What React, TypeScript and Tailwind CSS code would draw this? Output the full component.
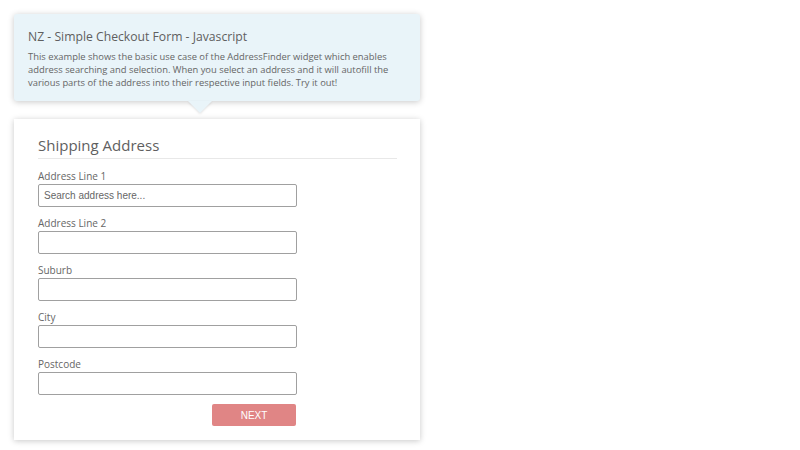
import React from 'react';

const fields = [
  { label: 'Address Line 1', placeholder: 'Search address here...' },
  { label: 'Address Line 2', placeholder: '' },
  { label: 'Suburb', placeholder: '' },
  { label: 'City', placeholder: '' },
  { label: 'Postcode', placeholder: '' },
];

export default function App() {
  return (
    <div className="min-h-[450px] w-[800px] bg-white font-['Open_Sans',sans-serif] text-[#5f5f5f]">
      <div className="w-[406px] ml-[14px] pt-[14px]">
        {/* Intro box */}
        <div className="relative bg-[#e9f4f9] rounded-[3px] shadow-[0_1px_6px_rgba(0,0,0,0.22)] px-[14px] pt-[14px] pb-[12px]">
          <h1 className="text-[12.2px] leading-[18px] text-[#5f5f5f] mb-[4px]">NZ - Simple Checkout Form - Javascript</h1>
          <p className="text-[9.4px] leading-[13px] text-[#666] whitespace-nowrap">
            This example shows the basic use case of the AddressFinder widget which enables
            <br />
            address searching and selection. When you select an address and it will autofill the
            <br />
            various parts of the address into their respective input fields. Try it out!
          </p>
          {/* arrow */}
          <div className="absolute left-[174px] -bottom-[12px] w-0 h-0 border-x-[12px] border-x-transparent border-t-[12px] border-t-[#e9f4f9] drop-shadow-[0_1px_1px_rgba(0,0,0,0.12)]" />
        </div>

        {/* Form card */}
        <div className="mt-[18px] bg-white shadow-[0_1px_6px_rgba(0,0,0,0.22)] pl-[24px] pr-[23px] pt-[15px] pb-[14px]">
          <h2 className="text-[15px] leading-[22px] text-[#5f5f5f] pb-[2px] border-b border-[#e8e8e8]">Shipping Address</h2>
          <div className="pt-[10px]">
            {fields.map((f) => (
              <div key={f.label} className="mb-[9px] last:mb-0">
                <label className="block text-[10px] leading-[14px] text-[#666] mb-[1px]">{f.label}</label>
                <input
                  className="block w-[259px] h-[23px] border border-[#a0a0a0] rounded-[2px] px-[5px] font-['Liberation_Sans',sans-serif] text-[10px] text-[#555] placeholder:text-[#666] outline-none"
                  placeholder={f.placeholder}
                />
              </div>
            ))}
          </div>
          <div className="w-[259px] flex justify-end mt-[9px]">
            <button className="w-[84px] h-[22px] bg-[#e08585] rounded-[2px] text-white font-['Liberation_Sans',sans-serif] text-[10px] mr-[1px]">
              NEXT
            </button>
          </div>
        </div>
      </div>
    </div>
  );
}
